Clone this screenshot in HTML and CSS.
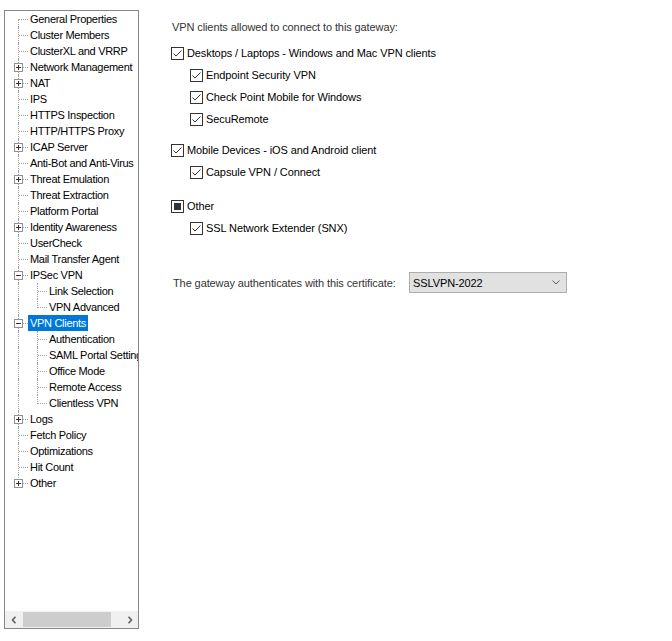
FILE: index.html
```html
<!DOCTYPE html>
<html lang="en">
<head>
    <meta charset="UTF-8">
    <title>Gateway Properties - VPN Clients</title>
    <link rel="stylesheet" href="styles.css">
</head>
<body>
    <div class="window">
        <div class="tree-panel">
            <div class="tree">
                <div class="node first"><span class="label">General Properties</span></div>
                <div class="node"><span class="label">Cluster Members</span></div>
                <div class="node"><span class="label">ClusterXL and VRRP</span></div>
                <div class="node"><span class="toggle plus"></span><span class="label">Network Management</span></div>
                <div class="node"><span class="toggle plus"></span><span class="label">NAT</span></div>
                <div class="node"><span class="label">IPS</span></div>
                <div class="node"><span class="label">HTTPS Inspection</span></div>
                <div class="node"><span class="label">HTTP/HTTPS Proxy</span></div>
                <div class="node"><span class="toggle plus"></span><span class="label">ICAP Server</span></div>
                <div class="node"><span class="label">Anti-Bot and Anti-Virus</span></div>
                <div class="node"><span class="toggle plus"></span><span class="label">Threat Emulation</span></div>
                <div class="node"><span class="label">Threat Extraction</span></div>
                <div class="node"><span class="label">Platform Portal</span></div>
                <div class="node"><span class="toggle plus"></span><span class="label">Identity Awareness</span></div>
                <div class="node"><span class="label">UserCheck</span></div>
                <div class="node"><span class="label">Mail Transfer Agent</span></div>
                <div class="node"><span class="toggle"></span><span class="label">IPSec VPN</span></div>
                <div class="node child"><i class="branch"></i><span class="label">Link Selection</span></div>
                <div class="node child last-child"><i class="branch"></i><span class="label">VPN Advanced</span></div>
                <div class="node selected"><span class="toggle"></span><span class="label">VPN Clients</span></div>
                <div class="node child"><i class="branch"></i><span class="label">Authentication</span></div>
                <div class="node child"><i class="branch"></i><span class="label">SAML Portal Settings</span></div>
                <div class="node child"><i class="branch"></i><span class="label">Office Mode</span></div>
                <div class="node child"><i class="branch"></i><span class="label">Remote Access</span></div>
                <div class="node child last-child"><i class="branch"></i><span class="label">Clientless VPN</span></div>
                <div class="node"><span class="toggle plus"></span><span class="label">Logs</span></div>
                <div class="node"><span class="label">Fetch Policy</span></div>
                <div class="node"><span class="label">Optimizations</span></div>
                <div class="node"><span class="label">Hit Count</span></div>
                <div class="node last"><span class="toggle plus"></span><span class="label">Other</span></div>
            </div>
            <div class="hscroll">
                <div class="arrow">
                    <svg width="6" height="8" viewBox="0 0 6 8"><path d="M4.5 0.8 L1.5 4 L4.5 7.2" fill="none" stroke="#606060" stroke-width="1.6"/></svg>
                </div>
                <div class="thumb"></div>
                <div class="arrow">
                    <svg width="6" height="8" viewBox="0 0 6 8"><path d="M1.5 0.8 L4.5 4 L1.5 7.2" fill="none" stroke="#606060" stroke-width="1.6"/></svg>
                </div>
            </div>
        </div>

        <div class="content">
            <div class="caption">VPN clients allowed to connect to this gateway:</div>

            <div class="group first">
                <label class="check">
                    <svg class="box" width="13" height="13" viewBox="0 0 13 13"><rect x="0.5" y="0.5" width="12" height="12" fill="#fff" stroke="#333"/><path d="M2.5 6.5 L5 9 L10.5 3.5" fill="none" stroke="#333"/></svg>
                    Desktops / Laptops - Windows and Mac VPN clients
                </label>
                <label class="check sub">
                    <svg class="box" width="13" height="13" viewBox="0 0 13 13"><rect x="0.5" y="0.5" width="12" height="12" fill="#fff" stroke="#333"/><path d="M2.5 6.5 L5 9 L10.5 3.5" fill="none" stroke="#333"/></svg>
                    Endpoint Security VPN
                </label>
                <label class="check sub">
                    <svg class="box" width="13" height="13" viewBox="0 0 13 13"><rect x="0.5" y="0.5" width="12" height="12" fill="#fff" stroke="#333"/><path d="M2.5 6.5 L5 9 L10.5 3.5" fill="none" stroke="#333"/></svg>
                    Check Point Mobile for Windows
                </label>
                <label class="check sub">
                    <svg class="box" width="13" height="13" viewBox="0 0 13 13"><rect x="0.5" y="0.5" width="12" height="12" fill="#fff" stroke="#333"/><path d="M2.5 6.5 L5 9 L10.5 3.5" fill="none" stroke="#333"/></svg>
                    SecuRemote
                </label>
            </div>

            <div class="group">
                <label class="check">
                    <svg class="box" width="13" height="13" viewBox="0 0 13 13"><rect x="0.5" y="0.5" width="12" height="12" fill="#fff" stroke="#333"/><path d="M2.5 6.5 L5 9 L10.5 3.5" fill="none" stroke="#333"/></svg>
                    Mobile Devices - iOS and Android client
                </label>
                <label class="check sub">
                    <svg class="box" width="13" height="13" viewBox="0 0 13 13"><rect x="0.5" y="0.5" width="12" height="12" fill="#fff" stroke="#333"/><path d="M2.5 6.5 L5 9 L10.5 3.5" fill="none" stroke="#333"/></svg>
                    Capsule VPN / Connect
                </label>
            </div>

            <div class="group other">
                <label class="check">
                    <svg class="box" width="13" height="13" viewBox="0 0 13 13"><rect x="0.5" y="0.5" width="12" height="12" fill="#fff" stroke="#333"/><rect x="3" y="3" width="7" height="7" fill="#333"/></svg>
                    Other
                </label>
                <label class="check sub">
                    <svg class="box" width="13" height="13" viewBox="0 0 13 13"><rect x="0.5" y="0.5" width="12" height="12" fill="#fff" stroke="#333"/><path d="M2.5 6.5 L5 9 L10.5 3.5" fill="none" stroke="#333"/></svg>
                    SSL Network Extender (SNX)
                </label>
            </div>

            <div class="cert-row">
                <span class="cert-label">The gateway authenticates with this certificate:</span>
                <div class="select">
                    <span>SSLVPN-2022</span>
                    <svg width="8" height="5" viewBox="0 0 8 5"><path d="M0.5 0.5 L4 4 L7.5 0.5" fill="none" stroke="#606060"/></svg>
                </div>
            </div>
        </div>
    </div>
</body>
</html>
```

FILE: styles.css
```css
* {
    margin: 0;
    padding: 0;
    box-sizing: border-box;
}

body {
    font-family: "Liberation Sans", Arial, sans-serif;
    font-size: 11px;
    color: #000;
    background: #fff;
}

.window {
    display: flex;
    align-items: flex-start;
    padding: 10px 0 0 4px;
    height: 641px;
}

/* left navigation tree */

.tree-panel {
    width: 135px;
    height: 619px;
    border: 1px solid #828790;
    display: flex;
    flex-direction: column;
    flex-shrink: 0;
}

.tree {
    flex: 1;
    overflow: hidden;
    letter-spacing: -0.3px;
}

.node {
    position: relative;
    height: 16px;
    line-height: 16px;
    padding-left: 23px;
    white-space: nowrap;
}

.node::before {
    content: "";
    position: absolute;
    left: 13px;
    top: 0;
    bottom: 0;
    border-left: 1px dotted #a0a0a0;
}

.node.first::before {
    top: 8px;
}

.node.last::before {
    bottom: 7px;
}

.node::after {
    content: "";
    position: absolute;
    left: 14px;
    top: 8px;
    width: 9px;
    border-top: 1px dotted #a0a0a0;
}

.node.child {
    padding-left: 42px;
}

.node.child::after {
    left: 33px;
}

.branch {
    position: absolute;
    left: 32px;
    top: 0;
    bottom: 0;
    border-left: 1px dotted #a0a0a0;
}

.last-child .branch {
    bottom: 7px;
}

.toggle {
    position: absolute;
    z-index: 1;
    left: 9px;
    top: 4px;
    width: 9px;
    height: 9px;
    border: 1px solid #919191;
    background: #fff;
}

.toggle::before {
    content: "";
    position: absolute;
    left: 1px;
    top: 3px;
    width: 5px;
    height: 1px;
    background: #333;
}

.toggle.plus::after {
    content: "";
    position: absolute;
    left: 3px;
    top: 1px;
    width: 1px;
    height: 5px;
    background: #333;
}

.label {
    display: inline-block;
    padding: 0 2px;
    height: 16px;
}

.selected .label {
    background: #0078d7;
    color: #fff;
}

.hscroll {
    height: 17px;
    display: flex;
    background: #f0f0f0;
}

.arrow {
    width: 17px;
    display: flex;
    align-items: center;
    justify-content: center;
}

.thumb {
    width: 88px;
    margin: 1px 1px;
    background: #cdcdcd;
}

.hscroll .arrow:last-child {
    margin-left: auto;
}

/* right side options */

.content {
    padding: 9px 0 0 32px;
    letter-spacing: -0.1px;
}

.caption {
    height: 16px;
    line-height: 16px;
    color: #333;
    padding-left: 1px;
}

.group {
    margin-top: 9px;
}

.group.first {
    margin-top: 7px;
}

.group.other {
    margin-top: 12px;
}

.check {
    display: flex;
    align-items: center;
    gap: 3px;
    height: 22px;
}

.check .box {
    flex-shrink: 0;
}

.check.sub {
    margin-left: 19px;
}

.cert-row {
    display: flex;
    align-items: center;
    margin-top: 33px;
    height: 21px;
}

.cert-label {
    width: 238px;
    padding-left: 2px;
    color: #333;
}

.select {
    width: 158px;
    height: 21px;
    border: 1px solid #adadad;
    background: #e1e1e1;
    display: flex;
    align-items: center;
    padding: 0 6px 0 3px;
}

.select svg {
    margin-left: auto;
}
```
